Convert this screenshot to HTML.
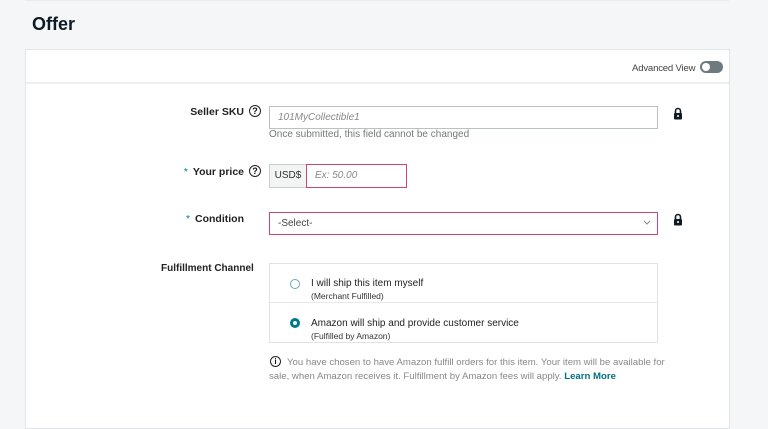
<!DOCTYPE html>
<html><head><style>
*{box-sizing:border-box;margin:0;padding:0}
body{width:768px;height:406px;background:#f4f6f7;font-family:"Liberation Sans",Arial,sans-serif;position:relative;overflow:hidden;color:#111}
.a{position:absolute}
.topline{left:25px;top:0;width:704px;height:1px;background:#e8ecee}
h1{position:absolute;left:32px;top:14px;font-size:18px;font-weight:bold;color:#0f1b24}
.card{left:25px;top:49px;width:705px;height:380px;background:#fff;border:1px solid #e3e6e6}
.hdr{left:26px;top:82px;width:703px;height:2px;background:#eef0f0}
.lbl{font-size:10.5px;font-weight:bold;color:#222;text-align:right;width:219px}
.star{color:#008296;font-weight:normal;margin-right:5px}
.q{width:12px;height:12px;border:1.3px solid #222;border-radius:50%;font-size:9px;font-weight:bold;text-align:center;line-height:10px}
.inp{border:1px solid #b9c1c4;height:23px;font-size:10px;color:#888;font-style:italic;padding-left:8px;line-height:21px}
.pink{border-color:#d0436c}
.small{font-size:10px;color:#777}
</style></head><body>
<div class="a topline"></div>
<h1>Offer</h1>
<div class="a card"></div>
<div class="a hdr"></div>
<div class="a" style="left:632px;top:63px;font-size:9.6px;color:#444;letter-spacing:-0.2px">Advanced View</div>
<div class="a" style="left:700px;top:61px;width:23px;height:12px;border-radius:6px;background:#6f7a7e"></div>
<div class="a" style="left:702px;top:63px;width:8px;height:8px;border-radius:50%;background:#fff"></div>

<div class="a lbl" style="left:25px;top:106px">Seller SKU</div>
<div class="a q" style="left:249px;top:105px">?</div>
<div class="a inp" style="left:269px;top:106px;width:389px">101MyCollectible1</div>
<div class="a small" style="left:269px;top:129px">Once submitted, this field cannot be changed</div>
<svg class="a" style="left:673px;top:107px" width="10" height="13" viewBox="0 0 10 13"><path d="M2.5 6V4a2.5 2.5 0 0 1 5 0v2" fill="none" stroke="#0f1b24" stroke-width="1.6"/><rect x="1" y="6" width="8" height="6.5" rx="1" fill="#0f1b24"/><circle cx="5" cy="9" r="1" fill="#fff"/></svg>

<div class="a lbl" style="left:25px;top:166px"><span class="star">*</span>Your price</div>
<div class="a q" style="left:249px;top:165px">?</div>
<div class="a" style="left:269px;top:164px;width:38px;height:24px;border:1px solid #c8cdcf;background:#f3f4f4;font-size:10px;color:#333;text-align:center;line-height:22px">USD$</div>
<div class="a inp pink" style="left:306px;top:164px;width:101px;height:24px">Ex: 50.00</div>

<div class="a lbl" style="left:25px;top:213px"><span class="star">*</span>Condition</div>
<div class="a inp pink" style="left:269px;top:212px;width:389px;color:#444;font-style:normal">-Select-</div>
<svg class="a" style="left:643px;top:220px" width="8" height="6"><path d="M1 1l3 3 3-3" fill="none" stroke="#888" stroke-width="1"/></svg>
<svg class="a" style="left:673px;top:213px" width="10" height="13" viewBox="0 0 10 13"><path d="M2.5 6V4a2.5 2.5 0 0 1 5 0v2" fill="none" stroke="#0f1b24" stroke-width="1.6"/><rect x="1" y="6" width="8" height="6.5" rx="1" fill="#0f1b24"/><circle cx="5" cy="9" r="1" fill="#fff"/></svg>

<div class="a" style="left:161px;top:263px;font-size:10px;font-weight:bold;color:#222">Fulfillment Channel</div>
<div class="a" style="left:269px;top:263px;width:389px;height:80px;border:1px solid #dfe3e4"></div>
<div class="a" style="left:270px;top:302px;width:387px;height:1px;background:#e6e9ea"></div>
<div class="a" style="left:290px;top:279px;width:10px;height:10px;border:1px solid #6aa9b3;border-radius:50%"></div>
<div class="a" style="left:311px;top:278px;font-size:10px;color:#222">I will ship this item myself</div>
<div class="a" style="left:311px;top:291px;font-size:8.5px;color:#333">(Merchant Fulfilled)</div>
<div class="a" style="left:290px;top:318px;width:10px;height:10px;border:3px solid #00788a;border-radius:50%"></div>
<div class="a" style="left:311px;top:318px;font-size:10px;color:#222">Amazon will ship and provide customer service</div>
<div class="a" style="left:311px;top:331px;font-size:8.5px;color:#333">(Fulfilled by Amazon)</div>

<div class="a" style="left:270px;top:356px;width:11px;height:11px;border:1.2px solid #222;border-radius:50%;font-size:8px;font-weight:bold;text-align:center;line-height:9px">i</div>
<div class="a small" style="left:269px;top:356px;width:400px;line-height:14px;color:#888;font-size:9.6px;text-indent:18px">You have chosen to have Amazon fulfill orders for this item. Your item will be available for sale, when Amazon receives it. Fulfillment by Amazon fees will apply. <span style="color:#007185;font-weight:bold">Learn More</span></div>
</body></html>
